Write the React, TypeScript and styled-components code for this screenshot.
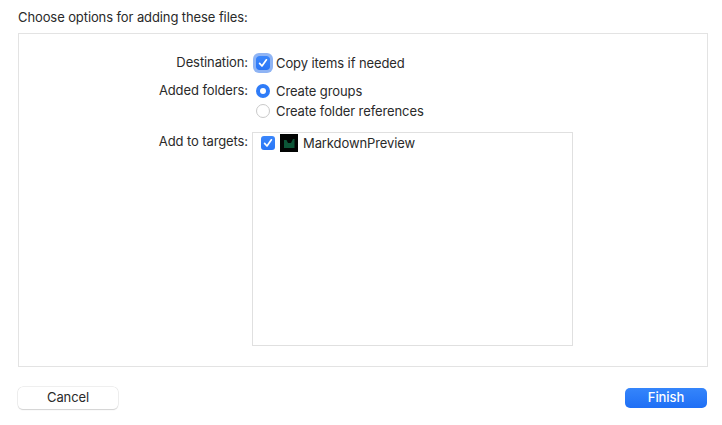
import React from 'react';
import styled, { createGlobalStyle } from 'styled-components';

const GlobalStyle = createGlobalStyle`
  html, body {
    margin: 0;
    padding: 0;
    background: #ffffff;
  }
  body {
    font-family: Inter, "Liberation Sans", sans-serif;
    font-size: 13px;
    letter-spacing: -0.1px;
    color: #2a2a2a;
  }
`;

const Sheet = styled.div`
  width: 722px;
  height: 425px;
  box-sizing: border-box;
  padding: 9px 14px 16px 18px;
  display: flex;
  flex-direction: column;
  overflow: hidden;
`;

const Heading = styled.div`
  height: 16px;
  line-height: 16px;
  margin-bottom: 8px;
`;

const Panel = styled.div`
  width: 690px;
  height: 334px;
  box-sizing: border-box;
  border: 1px solid #e3e3e3;
  padding: 19px 0 20px 0;
  display: grid;
  grid-template-columns: 229px 1fr;
  grid-auto-rows: min-content;
  column-gap: 8px;
`;

const Label = styled.div<{ $top?: number }>`
  text-align: right;
  line-height: 16px;
  padding-top: ${(p) => p.$top ?? 0}px;
`;

const Controls = styled.div<{ $after?: number }>`
  display: flex;
  flex-direction: column;
  margin-bottom: ${(p) => p.$after ?? 0}px;
`;

const OptionRow = styled.label`
  display: flex;
  align-items: center;
  height: 20px;
  line-height: 16px;
`;

const CheckBox = styled.span<{ $focused?: boolean }>`
  width: 14px;
  height: 14px;
  border-radius: 3px;
  background: linear-gradient(#3a86fb, #2a76f6);
  display: flex;
  align-items: center;
  justify-content: center;
  flex: none;
  box-shadow: ${(p) => (p.$focused ? '0 0 0 3px #8fb4f4' : 'none')};
`;

const RadioDot = styled.span<{ $on?: boolean }>`
  width: 14px;
  height: 14px;
  box-sizing: border-box;
  border-radius: 50%;
  flex: none;
  display: flex;
  align-items: center;
  justify-content: center;
  background: ${(p) => (p.$on ? '#2f7cf8' : '#ffffff')};
  border: ${(p) => (p.$on ? 'none' : '1px solid #c9c9c9')};
  &::after {
    content: '';
    display: ${(p) => (p.$on ? 'block' : 'none')};
    width: 6px;
    height: 6px;
    border-radius: 50%;
    background: #ffffff;
  }
`;

const OptionText = styled.span`
  margin-left: 6px;
`;

const TargetList = styled.div`
  width: 321px;
  height: 214px;
  box-sizing: border-box;
  border: 1px solid #e0e0e0;
  margin-left: -4px;
  padding: 1px 0 0 8px;
`;

const TargetRow = styled.div`
  display: flex;
  align-items: center;
  height: 18px;
`;

const TargetIcon = styled.svg`
  width: 18px;
  height: 18px;
  margin-left: 5px;
  flex: none;
`;

const TargetName = styled.span`
  margin-left: 5px;
`;

const Footer = styled.div`
  margin-top: 20px;
  width: 689px;
  display: flex;
  justify-content: space-between;
  align-items: center;
`;

const CancelButton = styled.button`
  width: 100px;
  height: 22px;
  border: none;
  border-radius: 5px;
  background: #ffffff;
  box-shadow: 0 0 0 0.5px #e0e0e0, 0 1px 1px rgba(0, 0, 0, 0.22);
  font: inherit;
  letter-spacing: inherit;
  color: #2a2a2a;
  padding: 0 0 2px;
`;

const FinishButton = styled.button`
  width: 82px;
  height: 20px;
  border: none;
  border-radius: 5px;
  background: linear-gradient(#3585fb, #1f6ff5);
  font: inherit;
  letter-spacing: inherit;
  font-weight: 500;
  color: #ffffff;
  padding: 0 0 2px;
`;

const Tick = () => (
  <svg width="10" height="10" viewBox="0 0 10 10" fill="none">
    <path d="M1.6 5.4 L4 8 L8.4 1.8" stroke="#fff" strokeWidth="1.7" strokeLinecap="round" strokeLinejoin="round" />
  </svg>
);

const App: React.FC = () => (
  <>
    <GlobalStyle />
    <Sheet>
      <Heading>Choose options for adding these files:</Heading>
      <Panel>
        <Label $top={1}>Destination:</Label>
        <Controls $after={8}>
          <OptionRow>
            <CheckBox $focused>
              <Tick />
            </CheckBox>
            <OptionText>Copy items if needed</OptionText>
          </OptionRow>
        </Controls>
        <Label $top={1}>Added folders:</Label>
        <Controls $after={11}>
          <OptionRow>
            <RadioDot $on />
            <OptionText>Create groups</OptionText>
          </OptionRow>
          <OptionRow>
            <RadioDot />
            <OptionText>Create folder references</OptionText>
          </OptionRow>
        </Controls>
        <Label $top={1}>Add to targets:</Label>
        <TargetList>
          <TargetRow>
            <CheckBox>
              <Tick />
            </CheckBox>
            <TargetIcon viewBox="0 0 18 18">
              <rect width="18" height="18" fill="#020403" />
              <path d="M4 6 L6.5 6 L8 9 L11 9 L13 5 L14.5 5 V14 H4 Z" fill="#0c5537" />
            </TargetIcon>
            <TargetName>MarkdownPreview</TargetName>
          </TargetRow>
        </TargetList>
      </Panel>
      <Footer>
        <CancelButton>Cancel</CancelButton>
        <FinishButton>Finish</FinishButton>
      </Footer>
    </Sheet>
  </>
);

export default App;
